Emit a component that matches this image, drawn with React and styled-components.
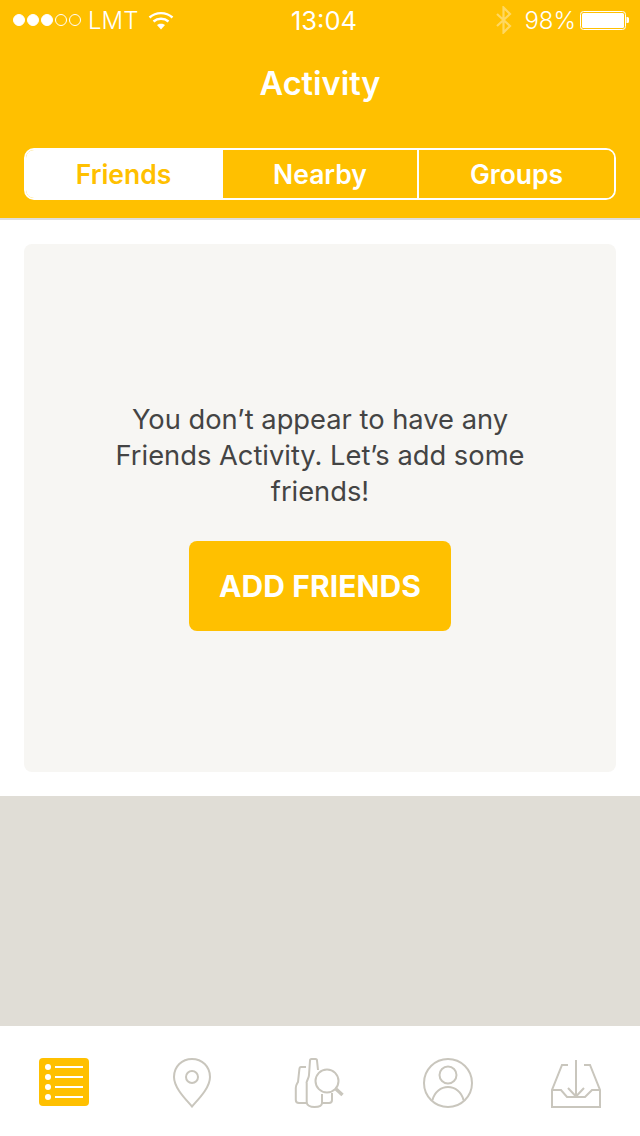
import React from "react";
import styled, { createGlobalStyle } from "styled-components";

const Global = createGlobalStyle`
  html, body {
    margin: 0;
    padding: 0;
    background: #fff;
  }
  * {
    box-sizing: border-box;
  }
`;

const YELLOW = "#ffc000";
const ICON = "#c9c6bd";

function Wifi() {
  return (
    <svg width="26" height="20" viewBox="0 0 26 20">
      <path d="M1.5 7.5C8 1.6 18 1.6 24.5 7.5" fill="none" stroke="#fff" strokeWidth="2.4" />
      <path d="M5.5 11.5C9.8 7.8 16.2 7.8 20.5 11.5" fill="none" stroke="#fff" strokeWidth="2.4" />
      <path d="M9 15C11.3 13.2 14.7 13.2 17 15L13 19.5Z" fill="#fff" />
    </svg>
  );
}

function Bluetooth() {
  return (
    <svg width="18" height="28" viewBox="0 0 18 28">
      <path d="M2 8L15 20L8.500 26.500V1.500L15 8L2 20" fill="none" stroke="#fff" strokeOpacity="0.38" strokeWidth="2.200" />
    </svg>
  );
}

function Battery() {
  return (
    <svg width="49" height="22" viewBox="0 0 49 22">
      <rect x="0.500" y="2.500" width="45" height="18" rx="3" fill="none" stroke="#fff" strokeWidth="1" />
      <rect x="2" y="4" width="42" height="15" rx="1.500" fill="#fff" />
      <path d="M46.500 8h1a1.500 1.500 0 0 1 1.500 1.500v3a1.500 1.500 0 0 1-1.500 1.500h-1z" fill="#fff" />
    </svg>
  );
}

function ListIcon() {
  const rows = [9, 19, 29, 39];
  return (
    <svg width="50" height="48" viewBox="0 0 50 48">
      <rect width="50" height="48" rx="4" fill={YELLOW} />
      {rows.map((y) => (
        <g key={y}>
          <circle cx="9" cy={y} r="3" fill="#fff" />
          <rect x="16" y={y - 1} width="28" height="2" fill="#fff" />
        </g>
      ))}
    </svg>
  );
}

function PinIcon() {
  return (
    <svg width="40" height="52" viewBox="0 0 40 52" fill="none" stroke={ICON} strokeWidth="2">
      <path d="M20 50.500C14 43.500 2 32 2 21C2 10.500 10 3 20 3C30 3 38 10.500 38 21C38 32 26 43.500 20 50.500Z" />
      <circle cx="20" cy="21" r="6" />
    </svg>
  );
}

function BeerIcon() {
  return (
    <svg width="52" height="52" viewBox="0 0 52 52" fill="none" stroke={ICON} strokeWidth="2">
      <path d="M12 11H7C6 11 5.500 12 5.400 13L4 26C3 28 1.800 29 1.800 32V44C1.800 46 3 47 5 47H13" />
      <path d="M12.500 27C12.500 25 15 22 15 19L16 4.500C16 3.500 16.500 3 17.500 3H21.500C22.500 3 23 3.500 23 4.500L24 14" />
      <path d="M12.700 27V46C12.700 49 16 51 20.500 51C25 51 28 50 28 47V38" />
      <path d="M38 37V44C38 46 37 47 35 47H28" />
      <circle cx="33" cy="25" r="11.500" />
      <path d="M42 33L48.500 39" strokeWidth="3.500" />
    </svg>
  );
}

function UserIcon() {
  return (
    <svg width="52" height="52" viewBox="0 0 52 52" fill="none" stroke={ICON} strokeWidth="2">
      <circle cx="26" cy="27" r="24" />
      <circle cx="26" cy="19" r="8.500" />
      <path d="M10.500 44C12.500 36 19 31 26 31C33 31 39.500 36 41.500 44" />
    </svg>
  );
}

function InboxIcon() {
  return (
    <svg width="52" height="52" viewBox="0 0 52 52" fill="none" stroke={ICON} strokeWidth="2">
      <path d="M18 9H12L2 34V51H50V34L40 9H34" />
      <path d="M2 34H11L17 41H35L42 34H50" />
      <path d="M26 4V41" />
      <path d="M18 32L26 40.500L34 32" />
    </svg>
  );
}

function App() {
  const tabs = ["Friends", "Nearby", "Groups"];
  return (
    <Page>
      <Global />
      <Header>
        <StatusBar>
          <StatusLeft>
            <Signal>
              {[true, true, true, false, false].map((on, i) => (
                <Dot key={i} $on={on} />
              ))}
            </Signal>
            <Carrier>LMT</Carrier>
            <Wifi />
          </StatusLeft>
          <Clock>13:04</Clock>
          <StatusRight>
            <Bluetooth />
            <Percent>98%</Percent>
            <Battery />
          </StatusRight>
        </StatusBar>
        <Title>Activity</Title>
        <Segments>
          {tabs.map((t, i) => (
            <Segment key={t} $active={i === 0}>
              {t}
            </Segment>
          ))}
        </Segments>
      </Header>
      <Content>
        <Card>
          <Message>You don’t appear to have any Friends Activity. Let’s add some friends!</Message>
          <AddButton>ADD FRIENDS</AddButton>
        </Card>
      </Content>
      <Filler />
      <TabBar>
        <ListIcon />
        <PinIcon />
        <BeerIcon />
        <UserIcon />
        <InboxIcon />
      </TabBar>
    </Page>
  );
}

const Page = styled.div`
  width: 640px;
  height: 1136px;
  display: flex;
  flex-direction: column;
  font-family: Inter, "Liberation Sans", sans-serif;
  overflow: hidden;
`;

const Header = styled.header`
  height: 220px;
  background: ${YELLOW};
  border-bottom: 2px solid #dedede;
  padding: 0 24px;
  color: #fff;
`;

const StatusBar = styled.div`
  height: 40px;
  margin: 0 -24px;
  padding: 0 11px 0 13px;
  display: grid;
  grid-template-columns: 278px auto 1fr;
  align-items: center;
  font-size: 24px;
  font-weight: 300;
`;

const StatusLeft = styled.div`
  display: flex;
  align-items: center;
`;

const StatusRight = styled.div`
  display: flex;
  align-items: center;
  justify-content: flex-end;
`;

const Signal = styled.div`
  display: flex;
  gap: 2px;
`;

const Dot = styled.span`
  width: 12px;
  height: 12px;
  border-radius: 50%;
  border: 1px solid #fff;
  background: ${(p) => (p.$on ? "#fff" : "transparent")};
`;

const Carrier = styled.span`
  margin: 0 10px 0 7px;
`;

const Clock = styled.span`
  font-size: 25.5px;
  font-weight: 400;
`;

const Percent = styled.span`
  margin: 0 4px 0 11px;
`;

const Title = styled.h1`
  margin: 0;
  height: 108px;
  padding-top: 24px;
  font-size: 32.5px;
  line-height: 40px;
  font-weight: 600;
  text-align: center;
`;

const Segments = styled.div`
  height: 52px;
  display: grid;
  grid-template-columns: 195px 196px 1fr;
  border: 2px solid #fff;
  border-radius: 10px;
  overflow: hidden;
`;

const Segment = styled.div`
  display: flex;
  align-items: center;
  justify-content: center;
  font-size: 26.5px;
  font-weight: 600;
  background: ${(p) => (p.$active ? "#fff" : YELLOW)};
  color: ${(p) => (p.$active ? YELLOW : "#fff")};
  border-left: ${(p) => (p.$active ? "0" : "2px solid #fff")};
`;

const Content = styled.main`
  height: 576px;
  padding: 24px;
  background: #fff;
`;

const Card = styled.section`
  height: 528px;
  padding-top: 158px;
  background: #f7f6f3;
  border-radius: 8px;
  display: flex;
  flex-direction: column;
  align-items: center;
`;

const Message = styled.p`
  width: 440px;
  margin: 0 0 31px;
  font-size: 27.3px;
  line-height: 36px;
  font-weight: 400;
  color: #444;
  text-align: center;
`;

const AddButton = styled.button`
  width: 262px;
  height: 90px;
  border: 0;
  border-radius: 8px;
  background: ${YELLOW};
  color: #fff;
  font-family: inherit;
  font-size: 30px;
  font-weight: 700;
  letter-spacing: 0.1px;
`;

const Filler = styled.div`
  height: 230px;
  background: #e0ddd6;
`;

const TabBar = styled.nav`
  flex: 1;
  background: #fff;
  padding-top: 2px;
  display: grid;
  grid-template-columns: repeat(5, 1fr);
  align-items: center;
  justify-items: center;
`;

export default App;
